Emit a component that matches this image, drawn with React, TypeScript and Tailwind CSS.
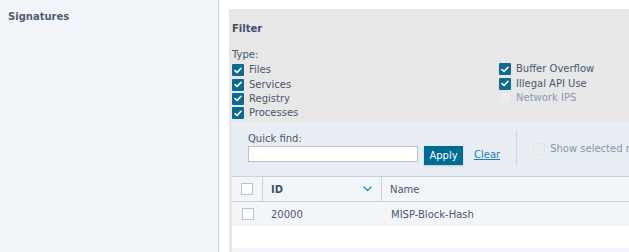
import React from 'react';

const TYPES_LEFT = [
  { label: 'Files', checked: true },
  { label: 'Services', checked: true },
  { label: 'Registry', checked: true },
  { label: 'Processes', checked: true },
];

const TYPES_RIGHT = [
  { label: 'Buffer Overflow', checked: true },
  { label: 'Illegal API Use', checked: true },
  { label: 'Network IPS', checked: false, disabled: true },
];

function Check({ checked, disabled }: { checked?: boolean; disabled?: boolean }) {
  if (checked) {
    return (
      <span className="flex h-[12px] w-[12px] shrink-0 items-center justify-center rounded-[1px] bg-[#0f6b8e]">
        <svg width="8" height="7" viewBox="0 0 8 7" fill="none">
          <path d="M1 3.6 L3.1 5.5 L7 1.3" stroke="white" strokeWidth="1.6" strokeLinecap="round" strokeLinejoin="round" />
        </svg>
      </span>
    );
  }
  if (disabled) {
    return <span className="h-[12px] w-[12px] shrink-0 rounded-[1px] border border-[#e2e4e7] bg-[#ececec]" />;
  }
  return <span className="h-[12px] w-[12px] shrink-0 border border-[#b9c4d0] bg-white" />;
}

function TypeRow({ label, checked, disabled }: { label: string; checked?: boolean; disabled?: boolean }) {
  return (
    <div className="flex h-[14.35px] items-center">
      <Check checked={checked} disabled={disabled} />
      <span className={`ml-[5px] leading-[14px] ${disabled ? 'text-[#8899b0]' : ''}`}>{label}</span>
    </div>
  );
}

export default function App() {
  return (
    <div className="flex h-[252px] w-[629px] overflow-hidden bg-white font-['DejaVu_Sans',sans-serif] text-[10px] text-[#475870]">
      <aside className="w-[219px] shrink-0 border-r border-[#cdd6e1] bg-[#f2f5f9] pl-[8px] pt-[10px]">
        <h2 className="font-bold leading-[14px] text-[#4c5e77]">Signatures</h2>
      </aside>

      <main className="ml-[10px] mt-[9px] flex min-w-0 flex-1 flex-col bg-[#e7e7e7] pl-[3px]">
        {/* filter */}
        <section className="h-[113px] pt-[13px]">
          <h3 className="font-bold leading-[14px] text-[#3e5068]">Filter</h3>
          <div className="mt-[12px] flex">
            <div className="w-[267px]">
              <div className="leading-[14px]">Type:</div>
              <div className="mt-[1px]">
                {TYPES_LEFT.map((t) => (
                  <TypeRow key={t.label} {...t} />
                ))}
              </div>
            </div>
            <div className="mt-[14px]">
              {TYPES_RIGHT.map((t) => (
                <TypeRow key={t.label} {...t} />
              ))}
            </div>
          </div>
        </section>

        {/* quick find toolbar */}
        <div className="flex h-[54px] shrink-0 bg-[#e8edf3] pl-[16px] pt-[8px]">
          <div className="w-[170px] shrink-0">
            <div className="mt-[2px] leading-[14px]">Quick find:</div>
            <input className="block h-[16px] w-[170px] border border-[#b8c2ce] bg-white outline-none" />
          </div>
          <button className="ml-[6px] mt-[16px] h-[19px] w-[39px] shrink-0 bg-[#006b91] text-[10px] leading-[19px] text-white shadow-[0_1px_2px_rgba(0,0,0,0.15)]">
            Apply
          </button>
          <span className="ml-[11px] mt-[18px] leading-[14px] text-[#1f80ad] underline">Clear</span>
          <div className="ml-[16px] h-[36px] w-px shrink-0 bg-[#cfd7e1]" />
          <div className="ml-[16px] mt-[13px] flex h-[12px] items-center whitespace-nowrap">
            <Check disabled />
            <span className="ml-[5px] leading-[14px] text-[#8595ab]">Show selected rules only</span>
          </div>
        </div>

        {/* table */}
        <div className="flex flex-1 flex-col bg-white">
          <div className="flex h-[26px] shrink-0 border-y border-[#c7d2de] bg-[#f2f5f8]">
            <div className="flex w-[31px] shrink-0 items-center justify-center border-r border-[#c7d2de]">
              <Check />
            </div>
            <div className="flex w-[119px] shrink-0 items-center justify-between border-r border-[#c7d2de] pl-[8px] pr-[9px]">
              <span className="font-bold text-[#3e5068]">ID</span>
              <svg width="9" height="6" viewBox="0 0 9 6" fill="none">
                <path d="M1 1 L4.5 4.5 L8 1" stroke="#3d8fc2" strokeWidth="1.5" strokeLinecap="round" strokeLinejoin="round" />
              </svg>
            </div>
            <div className="flex items-center pl-[8px]">Name</div>
          </div>
          <div className="flex h-[24px] shrink-0 bg-[#f3f6f9]">
            <div className="flex w-[31px] shrink-0 items-center justify-center">
              <Check />
            </div>
            <div className="flex w-[120px] shrink-0 items-center pl-[8px]">20000</div>
            <div className="flex items-center pl-[8px]">MISP-Block-Hash</div>
          </div>
          <div className="h-[22px] shrink-0 bg-white" />
          <div className="flex-1 bg-[#f2f5f9]" />
        </div>
      </main>
    </div>
  );
}
